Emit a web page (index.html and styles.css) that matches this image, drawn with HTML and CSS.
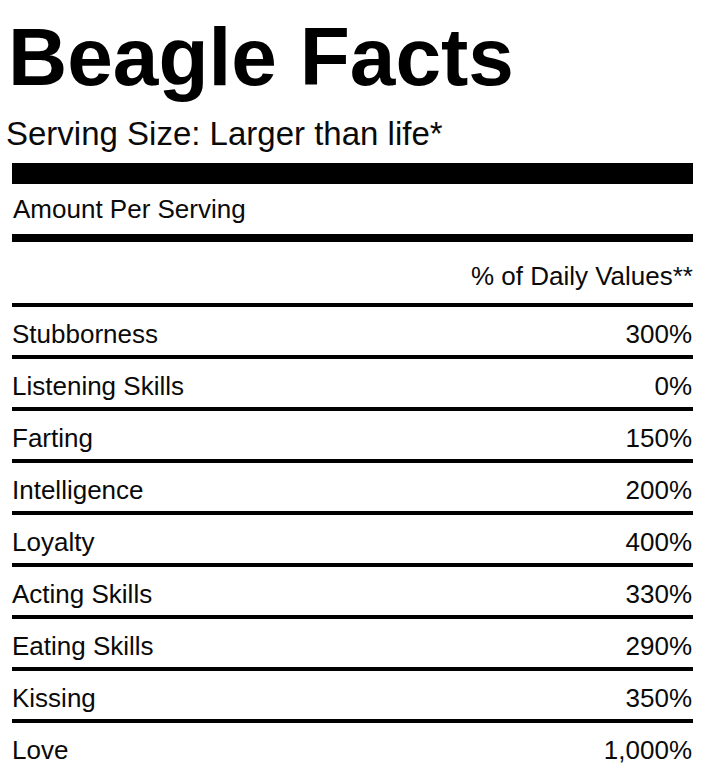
FILE: index.html
```html
<!DOCTYPE html>
<html lang="en">
<head>
<meta charset="utf-8">
<title>Beagle Facts</title>
<link rel="stylesheet" href="styles.css">
</head>
<body>
<div class="label">
  <h1 class="title">Beagle Facts</h1>
  <p class="serving">Serving Size: Larger than life*</p>
  <div class="panel">
    <div class="bar-thick"></div>
    <p class="amount">Amount Per Serving</p>
    <div class="bar-medium"></div>
    <p class="dv">% of Daily Values**</p>
    <ul class="facts">
      <li class="fact"><span>Stubborness</span><span class="val">300%</span></li>
      <li class="fact"><span>Listening Skills</span><span class="val">0%</span></li>
      <li class="fact"><span>Farting</span><span class="val">150%</span></li>
      <li class="fact"><span>Intelligence</span><span class="val">200%</span></li>
      <li class="fact"><span>Loyalty</span><span class="val">400%</span></li>
      <li class="fact"><span>Acting Skills</span><span class="val">330%</span></li>
      <li class="fact"><span>Eating Skills</span><span class="val">290%</span></li>
      <li class="fact"><span>Kissing</span><span class="val">350%</span></li>
      <li class="fact"><span>Love</span><span class="val">1,000%</span></li>
    </ul>
  </div>
</div>
</body>
</html>
```
FILE: styles.css
```css
html, body {
  margin: 0;
  padding: 0;
  background: #ffffff;
}
body {
  font-family: "Liberation Sans", Arial, sans-serif;
  color: #0a0a0a;
}
.label {
  display: flex;
  flex-direction: column;
}
.title {
  margin: 0;
  padding: 16px 0 0 8px;
  font-size: 82px;
  line-height: 82px;
  font-weight: 700;
  color: #000;
}
.serving {
  margin: 17px 0 0 0;
  padding-left: 6px;
  font-size: 33px;
  line-height: 38px;
}
.panel {
  margin: 10px 0 0 12px;
  width: 681px;
  display: flex;
  flex-direction: column;
}
.bar-thick {
  height: 21px;
  background: #000;
}
.amount {
  margin: 10px 0 0 0;
  padding-left: 1px;
  font-size: 26px;
  line-height: 30px;
}
.bar-medium {
  margin-top: 10px;
  height: 8px;
  background: #000;
}
.dv {
  margin: 19px 0 0 0;
  text-align: right;
  font-size: 26px;
  line-height: 30px;
}
.facts {
  list-style: none;
  margin: 12px 0 0 0;
  padding: 0;
}
.fact {
  display: flex;
  justify-content: space-between;
  border-top: 4px solid #000;
  padding: 12px 1px 6px 0;
  font-size: 26px;
  line-height: 30px;
}
```
